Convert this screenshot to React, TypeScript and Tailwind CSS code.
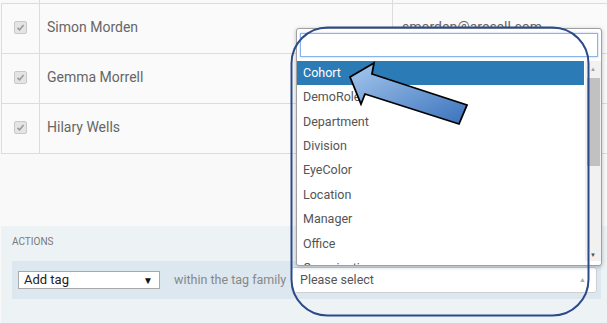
import React from 'react';

const people = ['Simon Morden', 'Gemma Morrell', 'Hilary Wells'];
const families = ['Cohort', 'DemoRole', 'Department', 'Division', 'EyeColor', 'Location', 'Manager', 'Office', 'Organisation'];

function Check() {
  return (
    <span className="w-[13px] h-[13px] rounded-[2px] border border-[#c9c9c9] bg-[#e4e4e4] flex items-center justify-center">
      <svg width="9" height="9" viewBox="0 0 9 9">
        <path d="M1.5 4.8 L3.6 6.8 L7.6 2" fill="none" stroke="#9a9a9a" strokeWidth="1.6" />
      </svg>
    </span>
  );
}

export default function App() {
  return (
    <div className="relative w-[607px] h-[323px] overflow-hidden bg-[#f9f9f9] font-['Roboto',sans-serif]">
      {/* table */}
      <div className="grid grid-cols-[39px_353px_1fr] h-[3px] ml-[1px]">
        <div className="border-r border-[#dcdcdc]" />
        <div className="border-r border-[#dcdcdc]" />
        <div />
      </div>
      <div className="ml-[1px] border-t border-l border-[#dcdcdc] bg-[#fafafa]">
        {people.map((name, i) => (
          <div key={name} className="grid grid-cols-[38px_353px_1fr] h-[50px] border-b border-[#dcdcdc]">
            <div className="border-r border-[#dcdcdc] flex items-center justify-center pb-[2px]">
              <Check />
            </div>
            <div className="border-r border-[#dcdcdc] flex items-center pl-[7px] pb-[2px] text-[14px] text-[#666]">
              {name}
            </div>
            <div className="flex items-center pl-[9px] pb-[2px] text-[14px] text-[#666]">
              {i === 0 ? 'smorden@aresell.com' : ''}
            </div>
          </div>
        ))}
      </div>

      {/* actions */}
      <div className="mt-[72px] h-[97px] bg-[#edf2f5] ml-[1px] pt-[10px] pl-[11px]">
        <div className="text-[10px] leading-[12px] text-[#7a7a7a] uppercase">Actions</div>
        <div className="mt-[13px] h-[38px] w-[589px] bg-[#dce7ef] flex items-center pl-[6px]">
          <div className="w-[142px] h-[18px] bg-white border border-[#a9a9a9] flex items-center justify-between pl-[5px] pr-[6px] text-[13px] text-[#222]">
            <span>Add tag</span>
            <span className="text-[10px] text-[#111]">▼</span>
          </div>
          <div className="ml-[14px] w-[117px] text-[12.5px] text-[#888] whitespace-nowrap">within the tag family</div>
          <div className="w-[306px] h-[26px] bg-white border border-[#cfcfcf] rounded-[3px] flex items-center justify-between pl-[8px] pr-[10px] text-[12.5px] text-[#555]">
            <span>Please select</span>
            <span className="text-[7px] text-[#aaa]">▲</span>
          </div>
        </div>
      </div>

      {/* open dropdown */}
      <div className="absolute left-[296px] top-[28px] w-[306px] h-[238px] bg-white border border-[#a0a0a0] rounded-[3px] shadow-[0_1px_4px_rgba(0,0,0,0.25)] overflow-hidden">
        <div className="px-[3px] pt-[4px]">
          <div className="h-[24px] border border-[#8cb2ea] shadow-[0_0_2px_#a9c6f2] bg-white" />
        </div>
        <div className="flex mt-[4px]">
          <div className="w-[287px]">
            {families.map((f, i) => (
              <div
                key={f}
                className={
                  i === 0
                    ? 'h-[24.4px] flex items-center pl-[6px] text-[12.5px] bg-[#2b7bb6] text-white'
                    : 'h-[24.4px] flex items-center pl-[6px] text-[12.5px] text-[#555]'
                }
              >
                {f}
              </div>
            ))}
          </div>
          <div className="ml-[1px] w-[16px] h-[200px] bg-[#f1f1f1] flex flex-col items-center">
            <span className="mt-[4px] text-[6px] leading-[8px] text-[#a0a0a0]">▲</span>
            <div className="mt-[5px] w-[13px] h-[88px] bg-[#c1c1c1]" />
            <div className="flex-1" />
            <span className="mb-[2px] text-[6px] leading-[8px] text-[#505050]">▼</span>
          </div>
        </div>
      </div>

      {/* annotation */}
      <svg className="absolute inset-0 pointer-events-none" width="607" height="323" viewBox="0 0 607 323">
        <defs>
          <linearGradient id="ag" x1="0" y1="0" x2="1" y2="1">
            <stop offset="0" stopColor="#a6c8ee" />
            <stop offset="1" stopColor="#3a72bc" />
          </linearGradient>
        </defs>
        <rect x="291.5" y="27.5" width="297" height="288" rx="36" fill="none" stroke="#2c4a8a" strokeWidth="2" />
        <polygon
          points="350,77 374,63 372,74 467,105 459,124 365,94 361,104"
          fill="url(#ag)"
          stroke="#000"
          strokeWidth="1.8"
          strokeLinejoin="miter"
        />
      </svg>
    </div>
  );
}
